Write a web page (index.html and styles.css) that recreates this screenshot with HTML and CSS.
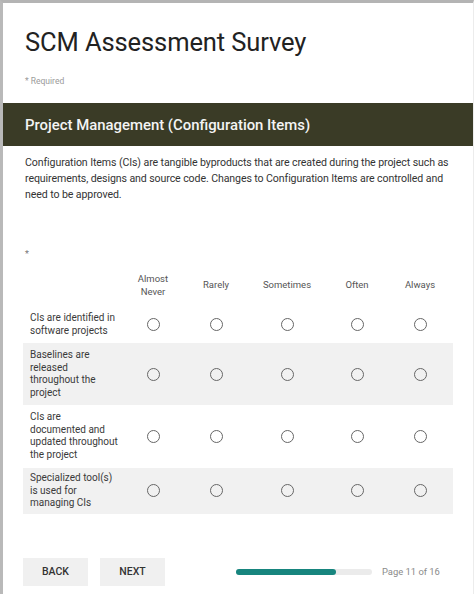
FILE: index.html
```html
<!DOCTYPE html>
<html>
<head>
<meta charset="utf-8">
<link rel="stylesheet" href="styles.css">
</head>
<body>
<div class="page">
  <header class="intro">
    <h1 class="title">SCM Assessment Survey</h1>
    <div class="required">* Required</div>
  </header>
  <div class="band">Project Management (Configuration Items)</div>
  <p class="desc">Configuration Items (CIs) are tangible byproducts that are created during the project such as requirements, designs and source code. Changes to Configuration Items are controlled and need to be approved.</p>
  <div class="star">*</div>
  <div class="grid">
    <div class="row head">
      <div class="label"></div>
      <div class="cell">Almost<br>Never</div>
      <div class="cell">Rarely</div>
      <div class="cell">Sometimes</div>
      <div class="cell">Often</div>
      <div class="cell">Always</div>
    </div>
    <div class="row">
      <div class="label">CIs are identified in<br>software projects</div>
      <div class="cell"><span class="radio"></span></div>
      <div class="cell"><span class="radio"></span></div>
      <div class="cell"><span class="radio"></span></div>
      <div class="cell"><span class="radio"></span></div>
      <div class="cell"><span class="radio"></span></div>
    </div>
    <div class="row alt">
      <div class="label">Baselines are<br>released<br>throughout the<br>project</div>
      <div class="cell"><span class="radio"></span></div>
      <div class="cell"><span class="radio"></span></div>
      <div class="cell"><span class="radio"></span></div>
      <div class="cell"><span class="radio"></span></div>
      <div class="cell"><span class="radio"></span></div>
    </div>
    <div class="row tall">
      <div class="label">CIs are<br>documented and<br>updated throughout<br>the project</div>
      <div class="cell"><span class="radio"></span></div>
      <div class="cell"><span class="radio"></span></div>
      <div class="cell"><span class="radio"></span></div>
      <div class="cell"><span class="radio"></span></div>
      <div class="cell"><span class="radio"></span></div>
    </div>
    <div class="row alt last">
      <div class="label">Specialized tool(s)<br>is used for<br>managing CIs</div>
      <div class="cell"><span class="radio"></span></div>
      <div class="cell"><span class="radio"></span></div>
      <div class="cell"><span class="radio"></span></div>
      <div class="cell"><span class="radio"></span></div>
      <div class="cell"><span class="radio"></span></div>
    </div>
  </div>
  <footer class="nav">
    <button class="btn">BACK</button>
    <button class="btn">NEXT</button>
    <div class="progress">
      <div class="track"><div class="fill"></div></div>
      <span class="pageno">Page 11 of 16</span>
    </div>
  </footer>
</div>
</body>
</html>
```
FILE: styles.css
```css
html, body {
  margin: 0;
  padding: 0;
  background: #ffffff;
}
body {
  font-family: Roboto, "Liberation Sans", sans-serif;
  color: #333;
}
.page {
  width: 474px;
  height: 594px;
  box-sizing: border-box;
  border-top: 3px solid #b4b4b4;
  border-left: 3px solid #b9b9b9;
  border-right: 1px solid #ececec;
  overflow: hidden;
}
.intro {
  padding: 24px 0 0 22px;
  height: 97px;
  box-sizing: border-box;
}
.title {
  margin: 0;
  font-weight: 400;
  font-size: 25.5px;
  line-height: 30px;
  color: #222;
  letter-spacing: -0.1px;
}
.required {
  margin-top: 19px;
  font-size: 8.5px;
  color: #9a9a9a;
}
.band {
  margin-top: 3px;
  height: 43px;
  box-sizing: border-box;
  padding: 12px 0 0 22px;
  background: #3a3b26;
  color: #f4f4f4;
  font-size: 14.9px;
  font-weight: 500;
  line-height: 20px;
}
.desc {
  margin: 9px 16px 0 22px;
  font-size: 10.6px;
  line-height: 16px;
  color: #333;
  letter-spacing: -0.1px;
}
.star {
  margin: 46px 0 0 22px;
  font-size: 9px;
  line-height: 10px;
  color: #777;
}
.grid {
  margin: 12px 0 0 20px;
  width: 430px;
}
.row {
  display: grid;
  grid-template-columns: 95px 56px 70px 72px 68px 58px;
  align-items: center;
  padding: 6px 4px 6px 7px;
}
.row.alt {
  background: #f1f1f1;
}
.row.tall {
  padding: 6px 4px 7px 7px;
}
.row.last {
  padding: 4px 4px 4px 7px;
}
.row.head {
  padding: 2px 4px 8px 7px;
}
.label {
  font-size: 10px;
  line-height: 12.5px;
  color: #3a3a3a;
}
.cell {
  text-align: center;
  font-size: 9.5px;
  line-height: 12.5px;
  color: #555;
}
.radio {
  display: inline-block;
  width: 11px;
  height: 11px;
  border: 1.8px solid #666;
  border-radius: 50%;
  vertical-align: middle;
}
.nav {
  margin: 44px 0 0 20px;
  display: flex;
  align-items: center;
}
.btn {
  width: 65px;
  height: 28px;
  border: none;
  background: #f0f0f0;
  font-family: Roboto, "Liberation Sans", sans-serif;
  font-size: 10.5px;
  font-weight: 500;
  color: #333;
  margin-right: 12px;
  padding: 0;
}
.progress {
  margin-left: 59px;
  display: flex;
  align-items: center;
}
.track {
  width: 136px;
  height: 6px;
  background: #ebebeb;
  border-radius: 3px;
}
.fill {
  width: 100px;
  height: 6px;
  background: #17857e;
  border-radius: 3px;
}
.pageno {
  margin-left: 10px;
  font-size: 9.4px;
  color: #8a8a8a;
}
```
